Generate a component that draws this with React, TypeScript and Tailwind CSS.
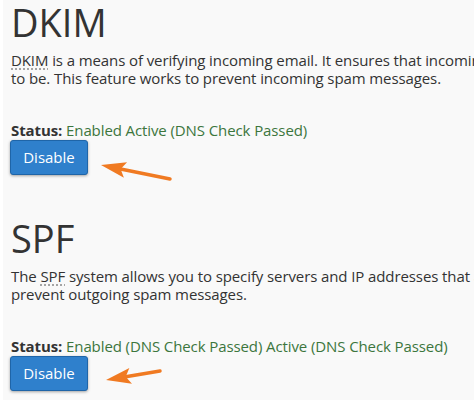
import React from 'react';

const Arrow = ({ className, x1, y1, x2, y2 }: { className: string; x1: number; y1: number; x2: number; y2: number }) => {
  // arrow pointing from (x1,y1) tail to (x2,y2) tip
  const ang = Math.atan2(y2 - y1, x2 - x1);
  const len = 25;
  const w = 8;
  const bx = x2 - Math.cos(ang) * len;
  const by = y2 - Math.sin(ang) * len;
  const px = -Math.sin(ang) * w;
  const py = Math.cos(ang) * w;
  const mx = x2 - Math.cos(ang) * (len - 5);
  const my = y2 - Math.sin(ang) * (len - 5);
  return (
    <svg className={className} width="474" height="400" viewBox="0 0 474 400">
      <line x1={x1} y1={y1} x2={mx} y2={my} stroke="#f07a22" strokeWidth="3.5" strokeLinecap="round" />
      <polygon points={`${x2},${y2} ${bx + px},${by + py} ${mx},${my} ${bx - px},${by - py}`} fill="#f07a22" />
    </svg>
  );
};

const Section = ({ title, children, status }: { title: string; children: React.ReactNode; status: string }) => (
  <section>
    <h1 className="text-[38px] leading-[44px] text-[#333]">{title}</h1>
    <p className="mt-[7px] whitespace-nowrap text-[15px] leading-[18px] tracking-[-0.1px] text-[#333]">{children}</p>
    <div className="mt-[34px] text-[15px] leading-[18px] tracking-[-0.1px]">
      <span className="font-bold text-[#333]">Status:</span> <span className="text-[#3c763d]">{status}</span>
    </div>
    <button className="-ml-[1px] mt-[1px] h-[35px] w-[78px] rounded-[3px] border border-[#1f65a8] bg-[#2f80cc] text-[15px] text-white shadow-[0_1px_3px_rgba(0,0,0,0.35)]">
      Disable
    </button>
  </section>
);

export default function App() {
  return (
    <div className="relative h-[400px] w-[474px] overflow-hidden border-l-[3px] border-white bg-[#f9f9f9] pl-[8px]" style={{ fontFamily: '"Open Sans", "Noto Sans", sans-serif' }}>
      <Section title="DKIM" status="Enabled Active (DNS Check Passed)">
        <abbr className="underline decoration-[#888] decoration-dotted underline-offset-[3px]">DKIM</abbr> is a means of verifying incoming email. It ensures that incoming
        <br />
        to be. This feature works to prevent incoming spam messages.
      </Section>
      <div className="h-[41px]" />
      <Section title="SPF" status="Enabled (DNS Check Passed) Active (DNS Check Passed)">
        The <abbr className="underline decoration-[#888] decoration-dotted underline-offset-[3px]">SPF</abbr> system allows you to specify servers and IP addresses that are
        <br />
        prevent outgoing spam messages.
      </Section>
      <Arrow className="pointer-events-none absolute left-0 top-0" x1={167} y1={179} x2={98} y2={165} />
      <Arrow className="pointer-events-none absolute left-0 top-0" x1={157} y1={371} x2={103} y2={380} />
    </div>
  );
}
